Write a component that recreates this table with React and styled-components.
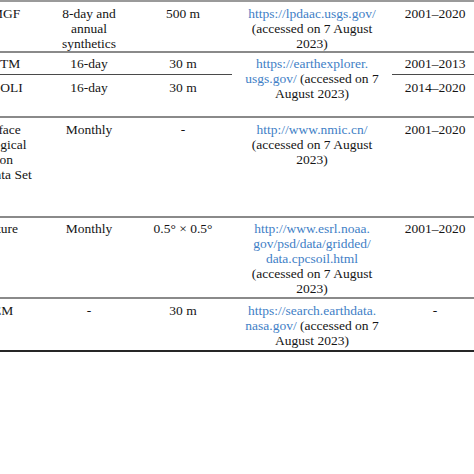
import React from 'react';
import styled, { createGlobalStyle } from 'styled-components';

const Global = createGlobalStyle`
  html, body {
    margin: 0;
    padding: 0;
    background: #fff;
    overflow: hidden;
  }
`;

const Page = styled.div`
  width: 474px;
  height: 474px;
  overflow: hidden;
  background: #fff;
`;

const Table = styled.table`
  table-layout: fixed;
  width: 534px;
  margin-left: -56px;
  border-collapse: collapse;
  font-family: "Liberation Serif", "DejaVu Serif", serif;
  font-size: 13.5px;
  line-height: 15px;
  color: #151515;
  border-top: 2px solid #9a9a9a;
  border-bottom: 2px solid #262626;
`;

const Row = styled.tr`
  height: ${p => p.$h}px;
  border-bottom: ${p => (p.$open ? 'none' : '2px solid #8a8a8a')};
`;

const Cell = styled.td`
  vertical-align: top;
  padding: ${p => p.$pt ?? 4}px 0 0 0;
  text-align: ${p => (p.$left ? 'left' : 'center')};
  white-space: nowrap;
  border-bottom: ${p => (p.$split ? '1px solid #4a4a4a' : 'none')};
`;

const Link = styled.span`
  color: #3f80c6;
`;

function Lines({ items }) {
  return items.map((t, i) => (
    <React.Fragment key={i}>
      {i > 0 && <br />}
      {t}
    </React.Fragment>
  ));
}

export default function App() {
  return (
    <Page>
      <Global />
      <Table>
        <colgroup>
          <col style={{ width: 100 }} />
          <col style={{ width: 90 }} />
          <col style={{ width: 98 }} />
          <col style={{ width: 160 }} />
          <col style={{ width: 86 }} />
        </colgroup>
        <tbody>
          <Row $h={51}>
            <Cell $left>MODIS MGF</Cell>
            <Cell><Lines items={['8-day and', 'annual', 'synthetics']} /></Cell>
            <Cell>500 m</Cell>
            <Cell>
              <Lines items={[<Link key="a">https://lpdaac.usgs.gov/</Link>, '(accessed on 7 August', '2023)']} />
            </Cell>
            <Cell>2001–2020</Cell>
          </Row>

          <Row $h={22} $open>
            <Cell $left $split $pt={3}>Landsat 5 TM</Cell>
            <Cell $split $pt={3}>16-day</Cell>
            <Cell $split $pt={3}>30 m</Cell>
            <Cell rowSpan={2} $pt={3}>
              <Lines
                items={[
                  <Link key="a">https://earthexplorer.</Link>,
                  <React.Fragment key="b"><Link>usgs.gov/</Link> (accessed on 7</React.Fragment>,
                  'August 2023)',
                ]}
              />
            </Cell>
            <Cell $split $pt={3}>2001–2013</Cell>
          </Row>
          <Row $h={43}>
            <Cell $left $pt={5}>Landsat 8 OLI</Cell>
            <Cell $pt={5}>16-day</Cell>
            <Cell $pt={5}>30 m</Cell>
            <Cell $pt={5}>2014–2020</Cell>
          </Row>

          <Row $h={100}>
            <Cell $left>
              <Lines items={['China Surface', 'Meteorological', 'Precipitation', 'Hourly Data Set', '(V3.0)', 'CMA']} />
            </Cell>
            <Cell>Monthly</Cell>
            <Cell>-</Cell>
            <Cell>
              <Lines items={[<Link key="a">http://www.nmic.cn/</Link>, '(accessed on 7 August', '2023)']} />
            </Cell>
            <Cell>2001–2020</Cell>
          </Row>

          <Row $h={81}>
            <Cell $left $pt={3}>Soil Moisture</Cell>
            <Cell $pt={3}>Monthly</Cell>
            <Cell $pt={3}>0.5° × 0.5°</Cell>
            <Cell $pt={3}>
              <Lines
                items={[
                  <Link key="a">http://www.esrl.noaa.</Link>,
                  <Link key="b">gov/psd/data/gridded/</Link>,
                  <Link key="c">data.cpcsoil.html</Link>,
                  '(accessed on 7 August',
                  '2023)',
                ]}
              />
            </Cell>
            <Cell $pt={3}>2001–2020</Cell>
          </Row>

          <Row $h={53} $open>
            <Cell $left>SRTM DEM</Cell>
            <Cell>-</Cell>
            <Cell>30 m</Cell>
            <Cell>
              <Lines
                items={[
                  <Link key="a">https://search.earthdata.</Link>,
                  <React.Fragment key="b"><Link>nasa.gov/</Link> (accessed on 7</React.Fragment>,
                  'August 2023)',
                ]}
              />
            </Cell>
            <Cell>-</Cell>
          </Row>
        </tbody>
      </Table>
    </Page>
  );
}
